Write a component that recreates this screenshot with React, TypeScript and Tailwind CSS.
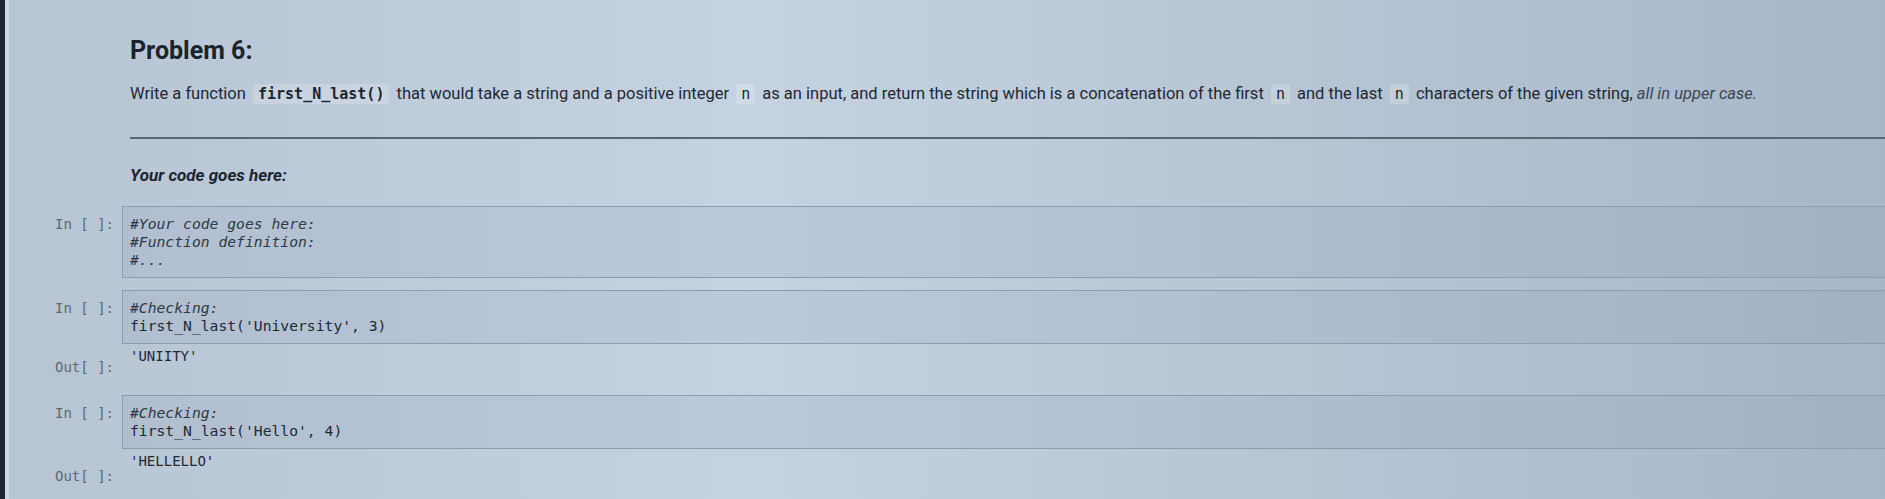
const sans = "font-['Roboto','Noto_Sans',sans-serif]";
const mono = "font-['DejaVu_Sans_Mono','Liberation_Mono',monospace]";

type Line = { text: string; comment?: boolean };

const Prompt = ({ label, pad }: { label: string; pad: string }) => (
  <div
    className={`${mono} ${pad} text-right text-[14px] leading-[18px] text-[#5e6976]`}
  >
    {label}
  </div>
);

const InputCell = ({ lines }: { lines: Line[] }) => (
  <>
    <Prompt label="In [ ]:" pad="pt-[9px]" />
    <div className="border border-r-0 border-[#8e9cab] bg-[#6f8299]/10 py-2 pl-[7px]">
      {lines.map((l, i) => (
        <div
          key={i}
          className={`${mono} whitespace-pre text-[14.7px] leading-[18px] ${
            l.comment ? "italic text-[#2e3946]" : "text-[#1f2833]"
          }`}
        >
          {l.text}
        </div>
      ))}
    </div>
  </>
);

const OutputCell = ({ value, pad }: { value: string; pad: string }) => (
  <>
    <Prompt label="Out[ ]:" pad={pad} />
    <div
      className={`${mono} pl-2 pt-[3px] text-[14px] leading-[18px] text-[#1f2833]`}
    >
      {value}
    </div>
  </>
);

const Code = ({ children, bold }: { children: string; bold?: boolean }) => (
  <span
    className={`${mono} mx-[3px] rounded-[2px] bg-white/20 px-[5px] py-[1px] text-[15px] text-[#1c2430] ${
      bold ? "font-bold" : ""
    }`}
  >
    {children}
  </span>
);

export default function App() {
  return (
    <div className="flex h-[499px] w-full overflow-hidden bg-linear-to-r from-[#b6c4d3] via-[#c4d2e1] via-40% to-[#a8b7c7]">
      <div className="w-[5px] shrink-0 bg-[#1d2331]" />
      <div className="w-[4px] shrink-0 bg-[#cbd7e4]" />

      <div className="grid min-w-0 flex-1 grid-cols-[105px_1fr] content-start gap-x-2 pt-[35px]">
        {/* markdown cell */}
        <div />
        <div className={`${sans} pl-2 text-[#1f2833]`}>
          <h2 className="text-[25px] font-bold leading-[32px] text-[#1a232e]">
            Problem 6:
          </h2>
          <p className="mt-[16px] whitespace-nowrap text-[16.5px] leading-[22px]">
            Write a function <Code bold>first_N_last()</Code> that would take a
            string and a positive integer <Code>n</Code> as an input, and return
            the string which is a concatenation of the first <Code>n</Code> and
            the last <Code>n</Code> characters of the given string,{" "}
            <em className="text-[#3a4554]">all in upper case.</em>
          </p>
          <div className="mt-[32px] h-[2px] bg-[#5a6673]" />
          <p className="mt-[25px] text-[17px] font-bold italic leading-[22px] text-[#1c2530]">
            Your code goes here:
          </p>
        </div>

        <div className="h-5 col-span-2" />
        <InputCell
          lines={[
            { text: "#Your code goes here:", comment: true },
            { text: "#Function definition:", comment: true },
            { text: "#...", comment: true },
          ]}
        />

        <div className="h-3 col-span-2" />
        <InputCell
          lines={[
            { text: "#Checking:", comment: true },
            { text: "first_N_last('University', 3)" },
          ]}
        />
        <OutputCell value="'UNIITY'" pad="pt-[14px]" />

        <div className="h-[19px] col-span-2" />
        <InputCell
          lines={[
            { text: "#Checking:", comment: true },
            { text: "first_N_last('Hello', 4)" },
          ]}
        />
        <OutputCell value="'HELLELLO'" pad="pt-[18px]" />
      </div>
    </div>
  );
}
